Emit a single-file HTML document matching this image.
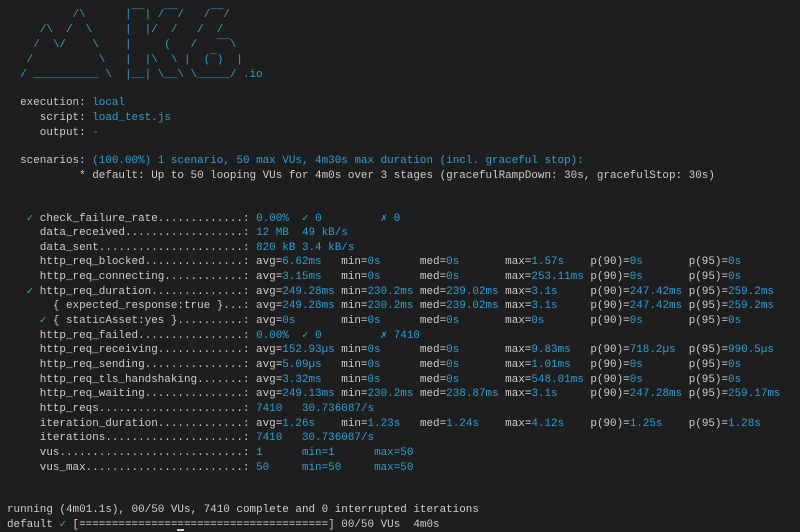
<!DOCTYPE html>
<html><head><meta charset="utf-8"><style>
html,body{margin:0;padding:0;background:#1e1e1e;width:800px;height:531px;overflow:hidden}
pre{margin:0;position:absolute;left:7px;font-family:"Liberation Mono","DejaVu Sans Mono",monospace;font-size:10.93px;line-height:14.65px;color:#cccccc;white-space:pre}
.c{color:#2a9fd6}
.g{color:#23c17a}
.k{display:inline-block;width:6.56px;overflow:visible;line-height:0}
</style></head><body>
<pre style="top:8px;line-height:15px"><span class="c">          /\      |‾‾| /‾‾/   /‾‾/
     /\  /  \     |  |/  /   /  /
    /  \/    \    |     (   /   ‾‾\
   /          \   |  |\  \ |  (‾)  |
  / __________ \  |__| \__\ \_____/ .io</span></pre>
<pre style="top:96px;line-height:15px">  execution: <span class="c">local</span>
     script: <span class="c">load_test.js</span>
     output: <span class="c">-</span></pre>
<pre style="top:154px;line-height:15px">  scenarios: <span class="c">(100.00%) 1 scenario, 50 max VUs, 4m30s max duration (incl. graceful stop):</span>
           * default: Up to 50 looping VUs for 4m0s over 3 stages (gracefulRampDown: 30s, gracefulStop: 30s)</pre>
<pre style="top:211.5px">   <span class="k g">✓</span> check_failure_rate.............: <span class="c">0.00%</span>  <span class="k g">✓</span> <span class="c">0</span>         <span class="k c">✗</span> <span class="c">0</span>
     data_received..................: <span class="c">12 MB  49 kB/s</span>
     data_sent......................: <span class="c">820 kB 3.4 kB/s</span>
     http_req_blocked...............: avg=<span class="c">6.62ms</span>   min=<span class="c">0s</span>      med=<span class="c">0s</span>       max=<span class="c">1.57s</span>    p(90)=<span class="c">0s</span>       p(95)=<span class="c">0s</span>
     http_req_connecting............: avg=<span class="c">3.15ms</span>   min=<span class="c">0s</span>      med=<span class="c">0s</span>       max=<span class="c">253.11ms</span> p(90)=<span class="c">0s</span>       p(95)=<span class="c">0s</span>
   <span class="k g">✓</span> http_req_duration..............: avg=<span class="c">249.28ms</span> min=<span class="c">230.2ms</span> med=<span class="c">239.02ms</span> max=<span class="c">3.1s</span>     p(90)=<span class="c">247.42ms</span> p(95)=<span class="c">259.2ms</span>
       { expected_response:true }...: avg=<span class="c">249.28ms</span> min=<span class="c">230.2ms</span> med=<span class="c">239.02ms</span> max=<span class="c">3.1s</span>     p(90)=<span class="c">247.42ms</span> p(95)=<span class="c">259.2ms</span>
     <span class="k g">✓</span> { staticAsset:yes }..........: avg=<span class="c">0s</span>       min=<span class="c">0s</span>      med=<span class="c">0s</span>       max=<span class="c">0s</span>       p(90)=<span class="c">0s</span>       p(95)=<span class="c">0s</span>
     http_req_failed................: <span class="c">0.00%</span>  <span class="k g">✓</span> <span class="c">0</span>         <span class="k c">✗</span> <span class="c">7410</span>
     http_req_receiving.............: avg=<span class="c">152.93µs</span> min=<span class="c">0s</span>      med=<span class="c">0s</span>       max=<span class="c">9.83ms</span>   p(90)=<span class="c">718.2µs</span>  p(95)=<span class="c">990.5µs</span>
     http_req_sending...............: avg=<span class="c">5.09µs</span>   min=<span class="c">0s</span>      med=<span class="c">0s</span>       max=<span class="c">1.01ms</span>   p(90)=<span class="c">0s</span>       p(95)=<span class="c">0s</span>
     http_req_tls_handshaking.......: avg=<span class="c">3.32ms</span>   min=<span class="c">0s</span>      med=<span class="c">0s</span>       max=<span class="c">548.01ms</span> p(90)=<span class="c">0s</span>       p(95)=<span class="c">0s</span>
     http_req_waiting...............: avg=<span class="c">249.13ms</span> min=<span class="c">230.2ms</span> med=<span class="c">238.87ms</span> max=<span class="c">3.1s</span>     p(90)=<span class="c">247.28ms</span> p(95)=<span class="c">259.17ms</span>
     http_reqs......................: <span class="c">7410</span>   <span class="c">30.736087/s</span>
     iteration_duration.............: avg=<span class="c">1.26s</span>    min=<span class="c">1.23s</span>   med=<span class="c">1.24s</span>    max=<span class="c">4.12s</span>    p(90)=<span class="c">1.25s</span>    p(95)=<span class="c">1.28s</span>
     iterations.....................: <span class="c">7410</span>   <span class="c">30.736087/s</span>
     vus............................: <span class="c">1</span>      <span class="c">min=1</span>      <span class="c">max=50</span>
     vus_max........................: <span class="c">50</span>     <span class="c">min=50</span>     <span class="c">max=50</span></pre>
<pre style="top:503px;line-height:14.5px">running (4m01.1s), 00/50 VUs, 7410 complete and 0 interrupted iterations
default <span class="k g">✓</span> [======================================] 00/50 VUs  4m0s</pre>
<div style="position:absolute;left:177px;top:529px;width:7px;height:2px;background:#cccccc"></div>
</body></html>
